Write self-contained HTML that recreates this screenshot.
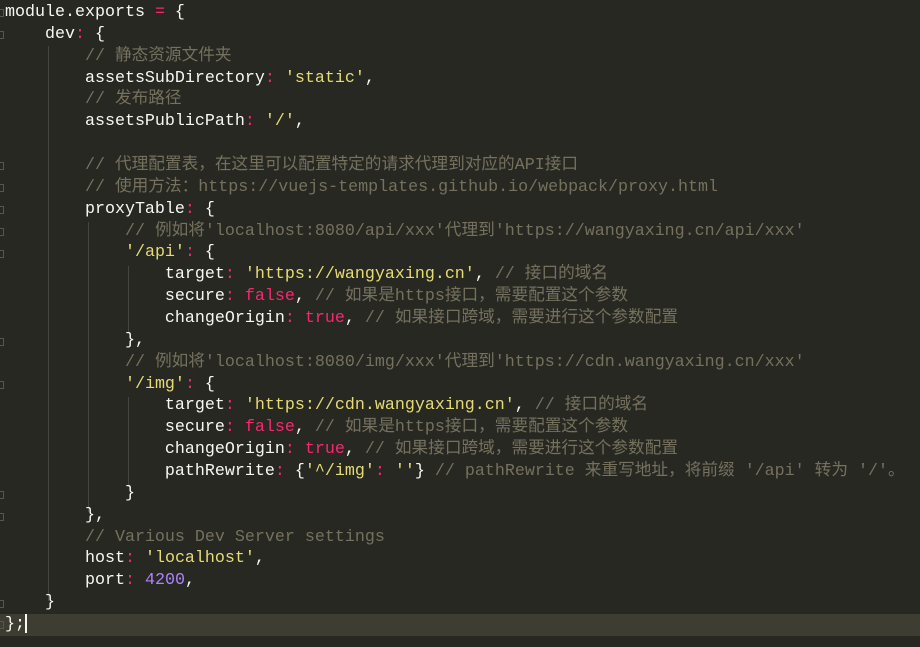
<!DOCTYPE html>
<html><head><meta charset="utf-8"><style>
html,body{margin:0;padding:0;background:#272822;width:920px;height:647px;overflow:hidden}
.ed{position:absolute;left:0;top:2px;width:920px}
.l{height:21.86px;line-height:21.86px;white-space:pre;font-family:"Liberation Mono","Noto Sans CJK SC",monospace;font-size:16.67px;color:#f8f8f2;padding-left:5px;position:relative}
.cur{background:#3e3d32}
.p{color:#f92672}.s{color:#e6db74}.c{color:#75715e}.n{color:#ae81ff}
.c .z{font-size:17.5px}
.g{position:absolute;width:1px;background:#46463e}
.f{position:absolute;left:0;width:4px;height:8px;border:1px solid #555;border-left:none;box-sizing:border-box}
.caret{display:inline-block;width:2px;height:19px;background:#f8f8f0;vertical-align:middle}
</style></head><body>
<div class="g" style="left:48px;top:46px;height:555px"></div>
<div class="g" style="left:88px;top:222px;height:290px"></div>
<div class="g" style="left:128px;top:266px;height:66px"></div>
<div class="g" style="left:128px;top:397px;height:90px"></div>
<div class="ed">
<div class="l">module.exports <span class="p">=</span> {</div>
<div class="l">    dev<span class="p">:</span> {</div>
<div class="l">        <span class="c">// 静态资源文件夹</span></div>
<div class="l">        assetsSubDirectory<span class="p">:</span> <span class="s">'static'</span>,</div>
<div class="l">        <span class="c">// 发布路径</span></div>
<div class="l">        assetsPublicPath<span class="p">:</span> <span class="s">'/'</span>,</div>
<div class="l"> </div>
<div class="l">        <span class="c">// 代理配置表，在这里可以配置特定的请求代理到对应的API接口</span></div>
<div class="l">        <span class="c">// 使用方法：https://vuejs-templates.github.io/webpack/proxy.html</span></div>
<div class="l">        proxyTable<span class="p">:</span> {</div>
<div class="l">            <span class="c">// 例如将'localhost:8080/api/xxx'代理到'https://wangyaxing.cn/api/xxx'</span></div>
<div class="l">            <span class="s">'/api'</span><span class="p">:</span> {</div>
<div class="l">                target<span class="p">:</span> <span class="s">'https://wangyaxing.cn'</span>, <span class="c">// 接口的域名</span></div>
<div class="l">                secure<span class="p">:</span> <span class="p">false</span>, <span class="c">// 如果是https接口，需要配置这个参数</span></div>
<div class="l">                changeOrigin<span class="p">:</span> <span class="p">true</span>, <span class="c">// 如果接口跨域，需要进行这个参数配置</span></div>
<div class="l">            },</div>
<div class="l">            <span class="c">// 例如将'localhost:8080/img/xxx'代理到'https://cdn.wangyaxing.cn/xxx'</span></div>
<div class="l">            <span class="s">'/img'</span><span class="p">:</span> {</div>
<div class="l">                target<span class="p">:</span> <span class="s">'https://cdn.wangyaxing.cn'</span>, <span class="c">// 接口的域名</span></div>
<div class="l">                secure<span class="p">:</span> <span class="p">false</span>, <span class="c">// 如果是https接口，需要配置这个参数</span></div>
<div class="l">                changeOrigin<span class="p">:</span> <span class="p">true</span>, <span class="c">// 如果接口跨域，需要进行这个参数配置</span></div>
<div class="l">                pathRewrite<span class="p">:</span> {<span class="s">'^/img'</span><span class="p">:</span> <span class="s">''</span>} <span class="c">// pathRewrite 来重写地址，将前缀 '/api' 转为 '/'。</span></div>
<div class="l">            }</div>
<div class="l">        },</div>
<div class="l">        <span class="c">// Various Dev Server settings</span></div>
<div class="l">        host<span class="p">:</span> <span class="s">'localhost'</span>,</div>
<div class="l">        port<span class="p">:</span> <span class="n">4200</span>,</div>
<div class="l">    }</div>
<div class="l cur">};<span class="caret"></span></div>
</div>
<div class="f" style="top:9px"></div>
<div class="f" style="top:31px"></div>
<div class="f" style="top:162px"></div>
<div class="f" style="top:184px"></div>
<div class="f" style="top:206px"></div>
<div class="f" style="top:228px"></div>
<div class="f" style="top:250px"></div>
<div class="f" style="top:338px"></div>
<div class="f" style="top:381px"></div>
<div class="f" style="top:491px"></div>
<div class="f" style="top:513px"></div>
<div class="f" style="top:600px"></div>
<div class="f" style="top:621px"></div>
</body></html>
